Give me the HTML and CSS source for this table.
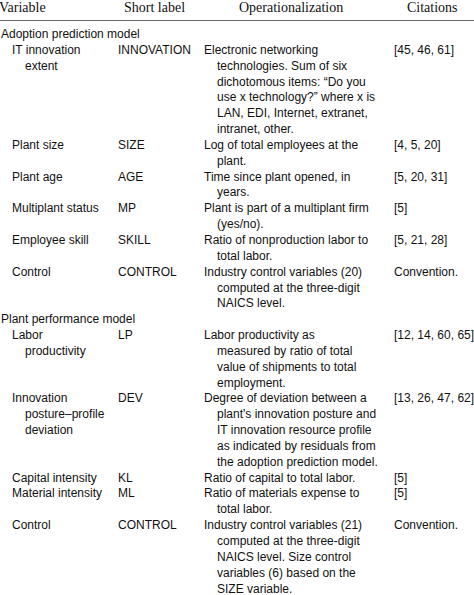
FILE: index.html
```html
<!DOCTYPE html>
<html>
<head>
<meta charset="utf-8">
<link rel="stylesheet" href="styles.css">
</head>
<body>
<div class="tbl">
  <div class="head">
    <div class="h h1">Variable</div>
    <div class="h h2">Short label</div>
    <div class="h h3">Operationalization</div>
    <div class="h h4">Citations</div>
  </div>
  <div class="body">
    <div class="sec">Adoption prediction model</div>

    <div class="var">IT innovation<br>extent</div>
    <div class="lbl">INNOVATION</div>
    <div class="op">Electronic networking<br>technologies. Sum of six<br>dichotomous items: “Do you<br>use x technology?” where x is<br>LAN, EDI, Internet, extranet,<br>intranet, other.</div>
    <div class="cit">[45, 46, 61]</div>

    <div class="var">Plant size</div>
    <div class="lbl">SIZE</div>
    <div class="op">Log of total employees at the<br>plant.</div>
    <div class="cit">[4, 5, 20]</div>

    <div class="var">Plant age</div>
    <div class="lbl">AGE</div>
    <div class="op">Time since plant opened, in<br>years.</div>
    <div class="cit">[5, 20, 31]</div>

    <div class="var">Multiplant status</div>
    <div class="lbl">MP</div>
    <div class="op">Plant is part of a multiplant firm<br>(yes/no).</div>
    <div class="cit">[5]</div>

    <div class="var">Employee skill</div>
    <div class="lbl">SKILL</div>
    <div class="op">Ratio of nonproduction labor to<br>total labor.</div>
    <div class="cit">[5, 21, 28]</div>

    <div class="var">Control</div>
    <div class="lbl">CONTROL</div>
    <div class="op">Industry control variables (20)<br>computed at the three-digit<br>NAICS level.</div>
    <div class="cit">Convention.</div>

    <div class="sec">Plant performance model</div>

    <div class="var">Labor<br>productivity</div>
    <div class="lbl">LP</div>
    <div class="op">Labor productivity as<br>measured by ratio of total<br>value of shipments to total<br>employment.</div>
    <div class="cit">[12, 14, 60, 65]</div>

    <div class="var">Innovation<br>posture–profile<br>deviation</div>
    <div class="lbl">DEV</div>
    <div class="op">Degree of deviation between a<br>plant's innovation posture and<br>IT innovation resource profile<br>as indicated by residuals from<br>the adoption prediction model.</div>
    <div class="cit">[13, 26, 47, 62]</div>

    <div class="var">Capital intensity</div>
    <div class="lbl">KL</div>
    <div class="op">Ratio of capital to total labor.</div>
    <div class="cit">[5]</div>

    <div class="var">Material intensity</div>
    <div class="lbl">ML</div>
    <div class="op">Ratio of materials expense to<br>total labor.</div>
    <div class="cit">[5]</div>

    <div class="var">Control</div>
    <div class="lbl">CONTROL</div>
    <div class="op">Industry control variables (21)<br>computed at the three-digit<br>NAICS level. Size control<br>variables (6) based on the<br>SIZE variable.</div>
    <div class="cit">Convention.</div>
  </div>
</div>
</body>
</html>
```

FILE: styles.css
```css
html, body {
  margin: 0;
  padding: 0;
  background: #ffffff;
}

body {
  width: 474px;
  height: 595px;
  overflow: hidden;
  color: #111111;
}

.tbl {
  width: 474px;
}

.head {
  display: grid;
  grid-template-columns: 118px 86px 190px 80px;
  height: 20px;
  border-bottom: 1px solid #6a6a6a;
  font-family: "Liberation Serif", "Times New Roman", serif;
  font-size: 14px;
  line-height: 16px;
  white-space: nowrap;
}

.h1 { padding-left: 0; margin-left: -1px; }
.h2 { padding-left: 6px; }
.h3 { padding-left: 35px; }
.h4 { padding-left: 13px; }

.body {
  display: grid;
  grid-template-columns: 118px 86px 190px 80px;
  padding-top: 6px;
  font-family: "Liberation Sans", Arial, sans-serif;
  font-size: 12px;
  line-height: 15.85px;
  white-space: nowrap;
}

.sec {
  grid-column: 1 / -1;
  padding-left: 1px;
}

.var {
  padding-left: 25px;
  text-indent: -13px;
}

.lbl {
  padding-left: 0;
}

.op {
  padding-left: 13px;
  text-indent: -13px;
}

.cit {
  padding-left: 0;
}
```
